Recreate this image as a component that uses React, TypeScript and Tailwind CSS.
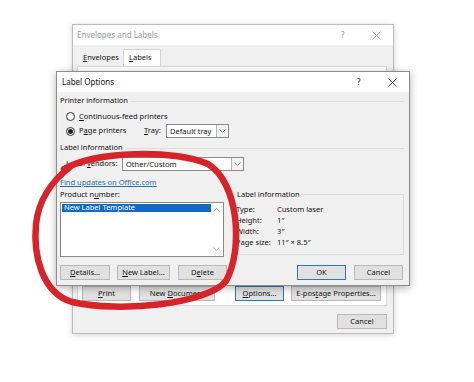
import type { ReactNode } from "react"

// Word の「ラベル オプション」ダイアログ（赤丸の書き込み付き）
const font = "font-['Noto_Sans','Liberation_Sans',sans-serif]"

const Chevron = ({ up = false, color = "#6b6b6b" }: { up?: boolean; color?: string }) => (
  <svg width="7" height="4" viewBox="0 0 7 4">
    <path d={up ? "M0.5 3.5 L3.5 0.6 L6.5 3.5" : "M0.5 0.5 L3.5 3.4 L6.5 0.5"} fill="none" stroke={color} strokeWidth="0.9" />
  </svg>
)

const CloseIcon = ({ color }: { color: string }) => (
  <svg width="9" height="9" viewBox="0 0 9 9">
    <path d="M0.5 0.5 L8.5 8.5 M8.5 0.5 L0.5 8.5" stroke={color} strokeWidth="0.9" />
  </svg>
)

const Btn = ({ children, w, def = false }: { children: ReactNode; w: string; def?: boolean }) => (
  <div
    className={
      def
        ? `flex h-[15px] ${w} items-center justify-center border-[1.5px] border-[#2a78c8] bg-[#e1e1e1]`
        : `flex h-[15px] ${w} items-center justify-center border border-[#b9b9b9] bg-[#e1e1e1]`
    }
  >
    {children}
  </div>
)

const GroupHeader = ({ children }: { children: ReactNode }) => (
  <div className="flex h-[18px] items-center gap-[3px]">
    <span>{children}</span>
    <div className="h-px flex-1 bg-[#dddddd]" />
  </div>
)

const Combo = ({ value, w }: { value: string; w: string }) => (
  <div className={`flex h-[14px] ${w} border border-[#8a8a8a] bg-white`}>
    <div className="flex-1 pl-[3px] leading-[12px]">{value}</div>
    <div className="flex w-[12px] items-center justify-center border-l border-[#b5b5b5] bg-[#f2f2f2]">
      <Chevron />
    </div>
  </div>
)

export default function App() {
  return (
    <div className={`relative h-[382px] w-[474px] overflow-hidden bg-white text-[7.5px] leading-none text-[#111111] ${font}`}>
      {/* 背面：封筒とラベル */}
      <div className="absolute left-[72px] top-[24px] flex h-[310px] w-[322px] flex-col border border-[#bdbdbd] bg-[#f0f0f0] shadow-[0_1px_6px_rgba(0,0,0,0.18)]">
        <div className="flex h-[20px] items-center bg-white pl-[4px] text-[#9a9a9a]">
          <span className="flex-1 text-[8px]">Envelopes and Labels</span>
          <span className="w-[8px] text-[8px]">?</span>
          <div className="ml-[23px] mr-[12px] flex w-[9px] items-center">
            <CloseIcon color="#9a9a9a" />
          </div>
        </div>
        <div className="flex h-[21px] items-end pl-[5px]">
          <div className="flex h-[17px] w-[45px] items-center pl-[5px]">
            <span className="underline">E</span>nvelopes
          </div>
          <div className="flex h-[17px] w-[38px] items-center border-x border-t border-[#d5d5d5] bg-white pl-[5px]">
            <span className="underline">L</span>abels
          </div>
        </div>
        <div className="ml-[4px] mr-[6px] flex h-[240px] flex-col justify-end border border-[#d9d9d9] bg-white pb-[4px] pl-[4px]">
          <div className="flex items-center">
            <Btn w="w-[49px]">
              <span className="underline">P</span>rint
            </Btn>
            <div className="ml-[8px]">
              <Btn w="w-[76px]">
                New&nbsp;<span className="underline">D</span>ocument
              </Btn>
            </div>
            <div className="ml-[20px]">
              <Btn w="w-[49px]" def>
                <span className="underline">O</span>ptions...
              </Btn>
            </div>
            <div className="ml-[7px]">
              <Btn w="w-[90px]">
                E-pos<span className="underline">t</span>age Properties...
              </Btn>
            </div>
          </div>
        </div>
        <div className="mr-[6px] mt-[8px] flex justify-end">
          <Btn w="w-[50px]">Cancel</Btn>
        </div>
      </div>

      {/* 前面：ラベル オプション */}
      <div className="absolute left-[56px] top-[71px] flex h-[215px] w-[354px] flex-col border border-[#8d8d8d] bg-[#f0f0f0] shadow-[0_2px_8px_rgba(0,0,0,0.3)]">
        <div className="flex h-[20px] items-center bg-white pl-[5px]">
          <span className="flex-1 text-[8px]">Label Options</span>
          <span className="w-[8px] text-[8px]">?</span>
          <div className="ml-[23px] mr-[12px] flex w-[9px] items-center">
            <CloseIcon color="#333333" />
          </div>
        </div>
        <div className="flex flex-1 flex-col pl-[3px] pr-[5px]">
          <GroupHeader>Printer information</GroupHeader>
          <div className="flex h-[13px] items-center pl-[6px]">
            <div className="h-[9px] w-[9px] rounded-full border border-[#333] bg-white" />
            <span className="ml-[4px]">
              <span className="underline">C</span>ontinuous-feed printers
            </span>
          </div>
          <div className="flex h-[16px] items-center pl-[6px]">
            <div className="flex h-[9px] w-[9px] items-center justify-center rounded-full border border-[#333] bg-white">
              <div className="h-[5px] w-[5px] rounded-full bg-[#222]" />
            </div>
            <span className="ml-[4px] w-[65px]">
              P<span className="underline">a</span>ge printers
            </span>
            <span className="w-[22px]">
              <span className="underline">T</span>ray:
            </span>
            <Combo value="Default tray" w="w-[63px]" />
          </div>
          <GroupHeader>Label information</GroupHeader>
          <div className="flex h-[14px] items-center pl-[6px]">
            <span className="w-[56px]">
              Label <span className="underline">v</span>endors:
            </span>
            <Combo value="Other/Custom" w="w-[122px]" />
          </div>
          <div className="flex gap-[8px]">
            <div className="flex w-[164px] flex-col">
              <div className="mt-[5px] flex h-[14px] items-center">
                <span className="text-[#1f6fc0] underline">Find updates on Office.com</span>
              </div>
              <div className="flex h-[10px] items-center">
                Product n<span className="underline">u</span>mber:
              </div>
              <div className="mt-[2px] flex h-[55px] border border-[#8a8a8a] bg-white p-px">
                <div className="flex-1">
                  <div className="flex h-[8px] items-center bg-[#1468c8] pl-[2px] text-white">New Label Template</div>
                </div>
                <div className="flex w-[11px] flex-col items-center justify-between py-[4px]">
                  <Chevron up color="#b0b0b0" />
                  <Chevron color="#b0b0b0" />
                </div>
              </div>
            </div>
            <fieldset className="mt-[20px] h-[64px] flex-1 border border-[#dcdcdc] px-[3px] pt-[6px]">
              <legend className="px-px">Label information</legend>
              {[
                ["Type:", "Custom laser"],
                ["Height:", "1\u2033"],
                ["Width:", "3\u2033"],
                ["Page size:", "11\u2033 \u00d7 8.5\u2033"],
              ].map(([k, v]) => (
                <div key={k} className="grid h-[11px] grid-cols-[41px_1fr] items-center">
                  <span>{k}</span>
                  <span>{v}</span>
                </div>
              ))}
            </fieldset>
          </div>
          <div className="mt-[8px] flex items-center">
            <Btn w="w-[50px]">
              <span className="underline">D</span>etails...
            </Btn>
            <div className="ml-[7px]">
              <Btn w="w-[53px]">
                <span className="underline">N</span>ew Label...
              </Btn>
            </div>
            <div className="ml-[8px]">
              <Btn w="w-[49px]">
                D<span className="underline">e</span>lete
              </Btn>
            </div>
            <div className="ml-[70px]">
              <Btn w="w-[49px]" def>
                OK
              </Btn>
            </div>
            <div className="ml-[8px]">
              <Btn w="w-[49px]">Cancel</Btn>
            </div>
          </div>
        </div>
      </div>

      {/* 赤ペンの丸 */}
      <svg className="pointer-events-none absolute left-0 top-0" width="474" height="382" viewBox="0 0 474 382">
        <path
          d="M64 169 C 95 151, 175 149, 208 164 C 238 182, 244 248, 226 281 C 208 304, 120 313, 72 302 C 42 293, 33 255, 36 224 C 39 198, 52 181, 70 167"
          fill="none"
          stroke="#d7242b"
          strokeWidth="6.5"
          strokeLinecap="round"
        />
      </svg>
    </div>
  )
}
